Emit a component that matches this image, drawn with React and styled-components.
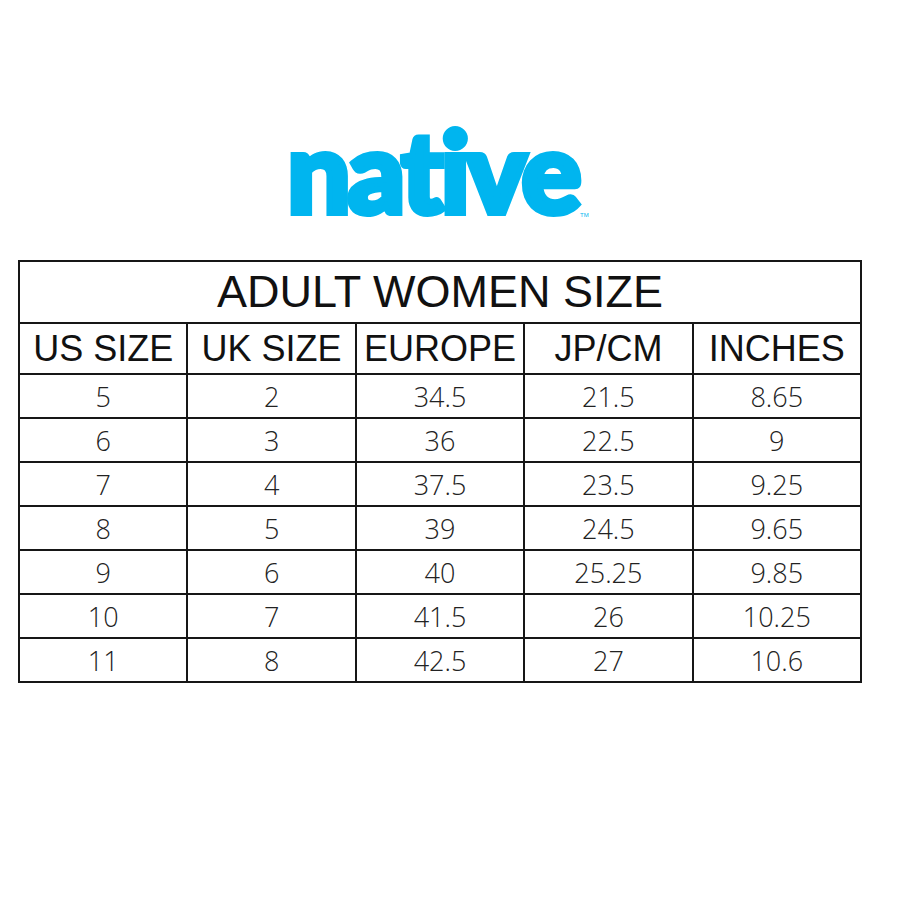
import React from 'react';
import styled, { createGlobalStyle } from 'styled-components';

const GlobalStyle = createGlobalStyle`
  html, body {
    margin: 0;
    padding: 0;
    background: #ffffff;
  }
`;

const Page = styled.div`
  width: 900px;
  height: 900px;
  background: #ffffff;
  display: flex;
  flex-direction: column;
  align-items: flex-start;
  padding: 0 0 0 18px;
  box-sizing: border-box;
`;

const LogoRow = styled.div`
  width: 844px;
  height: 260px;
  display: flex;
  justify-content: center;
  align-items: flex-end;
`;

const Logo = styled.div`
  position: relative;
  margin: 0 0 34px -14px;
  font-family: Lato, "Open Sans", sans-serif;
  font-weight: 900;
  font-size: 112px;
  line-height: 1;
  letter-spacing: -3px;
  color: #00b5ef;
  -webkit-text-stroke: 6px #00b5ef;
`;

const Tm = styled.span`
  position: absolute;
  right: -10px;
  bottom: 8px;
  font-family: "Liberation Sans", Arial, sans-serif;
  font-weight: 400;
  font-size: 6px;
  letter-spacing: 0;
  -webkit-text-stroke: 0;
  color: #00b5ef;
`;

const Chart = styled.div`
  width: 844px;
  display: grid;
  grid-template-columns: repeat(5, 1fr);
  grid-template-rows: 60px 49px repeat(7, 42px);
  gap: 2px;
  padding: 2px;
  box-sizing: border-box;
  background: #161616;
`;

const Cell = styled.div`
  background: #ffffff;
  display: flex;
  align-items: center;
  justify-content: center;
  color: #222222;
  font-family: "Open Sans", "Liberation Sans", sans-serif;
  font-weight: 300;
  font-size: 27px;
  box-sizing: border-box;
`;

const TitleCell = styled(Cell)`
  grid-column: 1 / -1;
  font-family: "Liberation Sans", Arial, sans-serif;
  font-weight: 400;
  font-size: 45px;
  color: #111111;
`;

const HeadCell = styled(Cell)`
  font-family: "Liberation Sans", Arial, sans-serif;
  font-weight: 400;
  font-size: 36px;
  color: #111111;
`;

const headers = ['US SIZE', 'UK SIZE', 'EUROPE', 'JP/CM', 'INCHES'];

const rows = [
  ['5', '2', '34.5', '21.5', '8.65'],
  ['6', '3', '36', '22.5', '9'],
  ['7', '4', '37.5', '23.5', '9.25'],
  ['8', '5', '39', '24.5', '9.65'],
  ['9', '6', '40', '25.25', '9.85'],
  ['10', '7', '41.5', '26', '10.25'],
  ['11', '8', '42.5', '27', '10.6'],
];

export default function App() {
  return (
    <>
      <GlobalStyle />
      <Page>
        <LogoRow>
          <Logo>
            native
            <Tm>TM</Tm>
          </Logo>
        </LogoRow>
        <Chart>
          <TitleCell>ADULT WOMEN SIZE</TitleCell>
          {headers.map(h => (
            <HeadCell key={h}>{h}</HeadCell>
          ))}
          {rows.map((row, i) =>
            row.map((v, j) => <Cell key={i + '-' + j}>{v}</Cell>)
          )}
        </Chart>
      </Page>
    </>
  );
}
